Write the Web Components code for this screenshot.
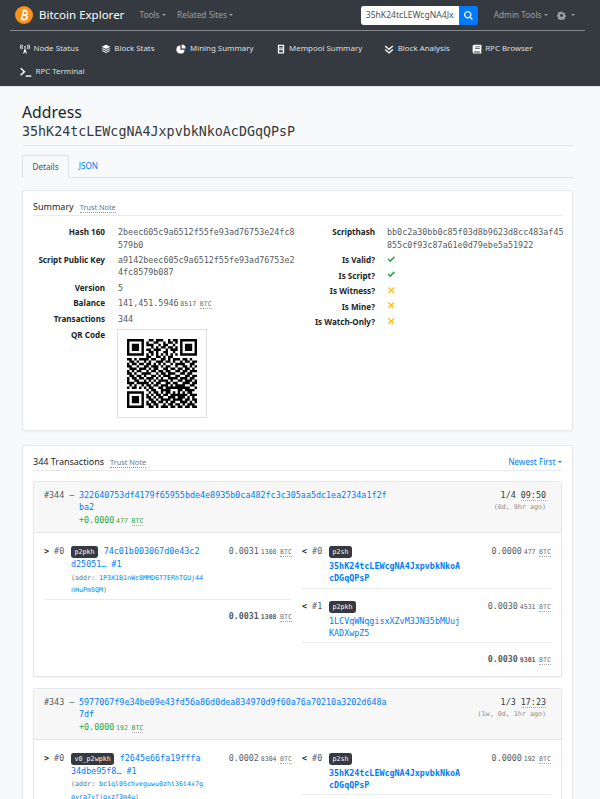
<!DOCTYPE html>
<html>
<head>
<meta charset="utf-8">
<title>Bitcoin Explorer</title>
<style>
    html, body { margin: 0; padding: 0; height: 799px; overflow: hidden; }
    body {
        background: #f8f9fa;
        color: #212529;
        font-family: "Noto Sans", "Open Sans", sans-serif;
        font-size: 8.3px;
        line-height: 12.6px;
    }
</style>
</head>
<body>
<be-navbar></be-navbar>
<be-page>
    <be-heading title="Address" sub="35hK24tcLEWcgNA4JxpvbkNkoAcDGqQPsP"></be-heading>
    <be-tabs></be-tabs>
    <be-card title="Summary" note="Trust Note">
        <be-summary></be-summary>
    </be-card>
    <be-card title="344 Transactions" note="Trust Note" action="Newest First" class="txs">
        <be-tx num="#344" hash="322640753df4179f65955bde4e8935b0ca482fc3c305aa5dc1ea2734a1f2fba2"
            amount="+0.0000" small="477" date="1/4" time="09:50" ago="(6d, 9hr ago)">
            <be-io slot="in" dir="&gt;" n="#0" badge="p2pkh" link="74c01b003067d0e43c2d25051… #1"
                addr="1P3X1B1nWc8MMD6T7ERhTGUj44nHuPm5QM" amount="0.0031" small="1308" line></be-io>
            <be-btc slot="in-total" amount="0.0031" small="1308" bold></be-btc>
            <be-io slot="out" dir="&lt;" n="#0" badge="p2sh" own="35hK24tcLEWcgNA4JxpvbkNkoAcDGqQPsP"
                amount="0.0000" small="477" line></be-io>
            <be-io slot="out" dir="&lt;" n="#1" badge="p2pkh" address="1LCVqWNqgisxXZvM3JN35bMUujKADXwpZ5"
                amount="0.0030" small="4531" line></be-io>
            <be-btc slot="out-total" amount="0.0030" small="9301" bold></be-btc>
        </be-tx>
        <be-tx num="#343" hash="5977067f9e34be09e43fd56a86d0dea834970d9f60a76a70210a3202d648a7df"
            amount="+0.0000" small="192" date="1/3" time="17:23" ago="(1w, 0d, 1hr ago)">
            <be-io slot="in" dir="&gt;" n="#0" badge="v0_p2wpkh" link="f2645e66fa19fffa34dbe95f8… #1"
                addr="bc1ql05chveguwu0zht36t4x7gpvra7yfjqxzf3m4u" amount="0.0002" small="8304" line></be-io>
            <be-io slot="out" dir="&lt;" n="#0" badge="p2sh" own="35hK24tcLEWcgNA4JxpvbkNkoAcDGqQPsP"
                amount="0.0000" small="192" line></be-io>
        </be-tx>
    </be-card>
</be-page>

<script>
const MONO = `"DejaVu Sans Mono", "Liberation Mono", monospace`;

const ICONS = {
    tower: `<path d="M8 5.2 5 15h1.7l.5-1.8h1.6l.5 1.8H11zM7.6 11.6l.4-1.6.4 1.6z"/><circle cx="8" cy="4.6" r="1.3"/><path fill="none" stroke="currentColor" stroke-width="1.4" d="M4.2 1.5a5 5 0 0 0 0 6.2M11.8 1.5a5 5 0 0 1 0 6.2M1.8.8a8 8 0 0 0 0 7.6M14.2.8a8 8 0 0 1 0 7.6"/>`,
    layers: `<path d="M8 1 15 4.5 8 8 1 4.5z"/><path d="M2.6 6.8 8 9.5l5.4-2.7L15 7.6 8 11 1 7.6z"/><path d="M2.6 10 8 12.7l5.4-2.7 1.6.8L8 14.4 1 10.8z"/>`,
    pie: `<path d="M7 2.2A6.6 6.6 0 1 0 13.8 9H7z"/><path d="M9 .6V7h6.4A6.6 6.6 0 0 0 9 .6z"/>`,
    memory: `<path fill-rule="evenodd" d="M3 1h10v14H3zM5 3v2.4h6V3zM5 7v1.4h6V7zM5 10v3h6v-3z"/>`,
    chevrons: `<path d="M2.6 2.4 8 7l5.4-4.6 1.4 1.7L8 10 1.2 4.1z"/><path d="M2.6 8 8 12.6 13.4 8l1.4 1.7L8 15.6 1.2 9.7z"/>`,
    book: `<path fill-rule="evenodd" d="M3.4 1H15v10.4l-.9.9.9 1V15H3.4A2.4 2.4 0 0 1 1 12.6V3.4A2.4 2.4 0 0 1 3.4 1zM5 4v1.2h7.5V4zM5 6.5v1.2h7.5V6.5zM3.4 12a.8.8 0 0 0 0 1.6h9.3V12z"/>`,
    gear: `<path fill-rule="evenodd" d="M6.6.8h2.8l.3 2 1.2.6 1.8-1 2 2-1 1.8.5 1.2 2 .3v2.6l-2 .4-.5 1.2 1 1.7-2 2-1.8-1-1.2.5-.3 2H6.6l-.3-2-1.2-.5-1.8 1-2-2 1-1.7-.5-1.2-2-.4V6.7l2-.3.5-1.2-1-1.8 2-2 1.8 1 1.2-.6zM8 5.4a2.6 2.6 0 1 0 0 5.2 2.6 2.6 0 0 0 0-5.2z"/>`,
    search: `<path fill-rule="evenodd" d="M6.6 0a6.6 6.6 0 0 1 5.3 10.5l3.8 3.8-1.5 1.5-3.8-3.8A6.6 6.6 0 1 1 6.6 0zm0 2.2a4.4 4.4 0 1 0 0 8.8 4.4 4.4 0 0 0 0-8.8z"/>`,
    check: `<path d="M1 8.5 3 6.5 6 9.4 13 2.5 15 4.6 6 13.5z"/>`,
    times: `<path d="M3.6 1.8 8 6.2l4.4-4.4 1.8 1.8L9.8 8l4.4 4.4-1.8 1.8L8 9.8l-4.4 4.4-1.8-1.8L6.2 8 1.8 3.6z"/>`
};

function icon(name, size = 10) {
    return `<svg xmlns="http://www.w3.org/2000/svg" width="${size}" height="${size}" viewBox="0 0 16 16" fill="currentColor">${ICONS[name]}</svg>`;
}

class BeNavItem extends HTMLElement {
    connectedCallback() {
        const shape = this.getAttribute("icon");
        const glyph = shape === "terminal"
            ? `<svg xmlns="http://www.w3.org/2000/svg" width="12" height="10" viewBox="0 0 19 16" fill="none" stroke="currentColor" stroke-width="2.2"><path d="M1 2l6 5.5L1 13"/><path d="M9 14.5h9"/></svg>`
            : icon(shape);
        this.attachShadow({ mode: "open" }).innerHTML = `
<style>
    :host { display: block; height: 23px; padding: 0 11px; }
    a { display: flex; align-items: center; gap: 3.5px; height: 23px; color: rgba(255,255,255,.85); font-size: 7.9px; }
    svg { flex: none; color: #fff; }
</style>
<a>${glyph}<span><slot></slot></span></a>`;
    }
}
customElements.define("be-nav-item", BeNavItem);

class BeNavbar extends HTMLElement {
    connectedCallback() {
        this.attachShadow({ mode: "open" }).innerHTML = `
<style>
    :host { display: block; background: #343a40; height: 87px; border-bottom: 1px solid #e4e6e8; box-sizing: border-box; }
    .top { display: flex; align-items: center; height: 31px; margin: 0 15px 0 10px; padding-left: 5px; border-bottom: 1px solid #85888c; box-sizing: border-box; }
    .brand { color: #fff; font-size: 11.5px; margin-left: 6px; }
    .menu { color: rgba(255,255,255,.5); font-size: 8.3px; }
    .caret::after { content: ""; display: inline-block; margin-left: 2.5px; vertical-align: 1.5px; border-top: 2.6px solid; border-left: 2.6px solid transparent; border-right: 2.6px solid transparent; }
    form { display: flex; margin: 0 0 0 auto; height: 19px; }
    input { width: 98px; height: 19px; box-sizing: border-box; border: 0; outline: 0; margin: 0; background: #fff; border-radius: 2.4px 0 0 2.4px; padding: 0 5px; color: #495057; font: 8.6px "Noto Sans", "Open Sans", sans-serif; }
    .go { width: 19px; background: #007bff; color: #fff; border-radius: 0 2.4px 2.4px 0; display: flex; align-items: center; justify-content: center; }
    .items { display: flex; flex-wrap: wrap; padding: 6px 0 0 9px; }
</style>
<div class="top">
    <svg xmlns="http://www.w3.org/2000/svg" width="18" height="18" viewBox="0 0 18 18">
        <circle cx="9" cy="9" r="9" fill="#f7931a"/>
        <g transform="rotate(14 9 9)" fill="none" stroke="#fff">
            <path stroke-width="1.5" d="M6.6 4.8h3.2a2 2 0 0 1 0 4.1H7.4h3a2.2 2.2 0 0 1 0 4.4H6.6M7.6 4.8v8.5"/>
            <path stroke-width=".9" d="M8.3 3.2v1.6M10 3.2v1.6M8.3 13.2v1.6M10 13.2v1.6"/>
        </g>
    </svg>
    <span class="brand">Bitcoin Explorer</span>
    <span class="menu caret" style="margin-left:15px">Tools</span>
    <span class="menu caret" style="margin-left:11px">Related Sites</span>
    <form>
        <input value="35hK24tcLEWcgNA4JxpvbkNkoAcDGqQPsP">
        <div class="go">${icon("search", 9)}</div>
    </form>
    <span class="menu caret" style="margin-left:16px">Admin Tools</span>
    <span class="menu caret" style="margin-left:9px;margin-right:10px;display:inline-flex;align-items:center">${icon("gear", 9)}<span style="width:2.5px"></span></span>
</div>
<div class="items">
    <be-nav-item icon="tower">Node Status</be-nav-item>
    <be-nav-item icon="layers">Block Stats</be-nav-item>
    <be-nav-item icon="pie">Mining Summary</be-nav-item>
    <be-nav-item icon="memory">Mempool Summary</be-nav-item>
    <be-nav-item icon="chevrons">Block Analysis</be-nav-item>
    <be-nav-item icon="book">RPC Browser</be-nav-item>
    <be-nav-item icon="terminal">RPC Terminal</be-nav-item>
</div>`;
    }
}
customElements.define("be-navbar", BeNavbar);

class BePage extends HTMLElement {
    connectedCallback() {
        this.attachShadow({ mode: "open" }).innerHTML = `
<style>
    :host { display: block; padding: 0 27px 0 22px; }
</style>
<slot></slot>`;
    }
}
customElements.define("be-page", BePage);

class BeHeading extends HTMLElement {
    connectedCallback() {
        this.attachShadow({ mode: "open" }).innerHTML = `
<style>
    :host { display: block; padding-top: 15px; height: 59px; box-sizing: border-box; border-bottom: 1px solid #e7e8ea; }
    h1 { margin: 0; font-size: 15.8px; font-weight: 400; line-height: 20px; }
    p { margin: 1px 0 0; font-family: ${MONO}; font-size: 13.35px; line-height: 18px; color: #343a40; }
</style>
<h1>${this.getAttribute("title")}</h1>
<p>${this.getAttribute("sub")}</p>`;
    }
}
customElements.define("be-heading", BeHeading);

class BeTabs extends HTMLElement {
    connectedCallback() {
        this.attachShadow({ mode: "open" }).innerHTML = `
<style>
    :host { display: flex; margin-top: 9px; height: 23px; box-sizing: border-box; border-bottom: 1px solid #dee2e6; margin-bottom: 12px; }
    a { display: block; padding: 0 9.6px; line-height: 22px; height: 23px; box-sizing: border-box; font-size: 8.1px; }
    .on { color: #495057; background: #f8f9fa; border: 1px solid #dee2e6; border-bottom-color: #f8f9fa; border-radius: 2.4px 2.4px 0 0; }
    .off { color: #007bff; }
</style>
<a class="on">Details</a><a class="off">JSON</a>`;
    }
}
customElements.define("be-tabs", BeTabs);

class BeCard extends HTMLElement {
    connectedCallback() {
        const action = this.getAttribute("action");
        this.attachShadow({ mode: "open" }).innerHTML = `
<style>
    :host { display: block; background: #fff; border: 1px solid #e6e7e9; border-radius: 2.4px; box-shadow: 0 1px 2px rgba(0,0,0,.04); padding: 7px 10px 9px; margin-bottom: 14px; }
    .head { display: flex; align-items: baseline; height: 17px; line-height: 17px; border-bottom: 1px solid #e9eaec; margin-bottom: 10px; }
    .title { font-size: 9px; }
    .note { margin-left: 6px; font-size: 7.3px; color: #6c757d; }
    .note span { border-bottom: 1px dotted #999; }
    .act { margin-left: auto; color: #007bff; font-size: 8.2px; }
    .act::after { content: ""; display: inline-block; margin-left: 2.5px; vertical-align: 1.5px; border-top: 2.6px solid; border-left: 2.6px solid transparent; border-right: 2.6px solid transparent; }
</style>
<div class="head">
    <span class="title">${this.getAttribute("title")}</span>
    <span class="note"><span>${this.getAttribute("note")}</span></span>
    ${action ? `<span class="act">${action}</span>` : ""}
</div>
<slot></slot>`;
    }
}
customElements.define("be-card", BeCard);

class BeKv extends HTMLElement {
    connectedCallback() {
        const w = this.getAttribute("w") ?? "72";
        const gap = this.getAttribute("gap") ?? "13";
        this.attachShadow({ mode: "open" }).innerHTML = `
<style>
    :host { display: grid; grid-template-columns: ${w}px minmax(0, 1fr); column-gap: ${gap}px; margin-bottom: var(--kv-gap, 2.7px); line-height: 12.6px; }
    .k { text-align: right; font-weight: 700; font-size: 8.1px; white-space: nowrap; }
    .v { font-family: ${MONO}; font-size: 8.4px; color: #555b61; word-break: break-all; min-height: 12.6px; }
    svg { vertical-align: -1px; }
</style>
<div class="k">${this.getAttribute("label")}</div>
<div class="v"><slot></slot></div>`;
    }
}
customElements.define("be-kv", BeKv);

class BeBtc extends HTMLElement {
    connectedCallback() {
        const bold = this.hasAttribute("bold");
        this.attachShadow({ mode: "open" }).innerHTML = `
<style>
    :host { display: inline-block; font-family: ${MONO}; font-size: 8.4px; line-height: 12.6px; color: var(--btc-color, #555b61); white-space: nowrap; font-weight: ${bold ? 700 : 400}; }
    small { font-size: 6.6px; margin-left: 1.8px; }
    .u { font-size: 6.6px; font-weight: 400; margin-left: 3.5px; color: var(--btc-unit, #6c757d); border-bottom: 1px dotted #aaa; }
</style>
${this.getAttribute("amount")}<small>${this.getAttribute("small")}</small><span class="u">BTC</span>`;
    }
}
customElements.define("be-btc", BeBtc);

class BeQr extends HTMLElement {
    connectedCallback() {
        const rows = [
            "11111110011011100101101111111", "10000010100110010110101000001",
            "10111010111001011001001011101", "10111010001010110110101011101",
            "10111010110111001011101011101", "10000010011010011001001000001",
            "11111110101010101010101111111", "00000000110011010110000000000",
            "11010111101100110101110110100", "01101001010011101101001011011",
            "10110110110101010010111100110", "11001001101110101100100110101",
            "01110111010110011011011011010", "10101100101101101100110110111",
            "11010011110010110111001101100", "01101101001101011100110011011",
            "10110110111010100111101110110", "10011001010101111010011011101",
            "11101111101011001101100111011", "01010010110110111010111100110",
            "10110101011001101111111111001", "00000000101100111100011011110",
            "11111110010110101101010101100", "10000010101011011011111110111",
            "10111010110101100111011101010", "10111010011010111101111011011",
            "10111010101101101011001110101", "10000010110110010110110101110",
            "11111110011010111011011011011"
        ];
        let d = "";
        rows.forEach((row, y) => {
            [...row].forEach((c, x) => { if (c === "1") d += `M${x} ${y}h1v1h-1z`; });
        });
        this.attachShadow({ mode: "open" }).innerHTML = `
<style>
    :host { display: block; width: 90px; height: 89px; box-sizing: border-box; border: 1px solid #dee2e6; background: #fff; padding: 9px; margin: .5px 0 0 -1px; }
    svg { display: block; }
</style>
<svg xmlns="http://www.w3.org/2000/svg" width="70" height="69" viewBox="0 0 29 29" preserveAspectRatio="none"><path d="${d}"/></svg>`;
    }
}
customElements.define("be-qr", BeQr);

class BeSummary extends HTMLElement {
    connectedCallback() {
        const mark = (ok) => `<span style="color:${ok ? "#28a745" : "#ffc107"}">${icon(ok ? "check" : "times", 8.5)}</span>`;
        this.attachShadow({ mode: "open" }).innerHTML = `
<style>
    :host { display: grid; grid-template-columns: 264px 268px; }
    .right { --kv-gap: 2.95px; }
</style>
<div>
    <be-kv label="Hash 160">2beec605c9a6512f55fe93ad76753e24fc8579b0</be-kv>
    <be-kv label="Script Public Key">a9142beec605c9a6512f55fe93ad76753e24fc8579b087</be-kv>
    <be-kv label="Version">5</be-kv>
    <be-kv label="Balance"><be-btc amount="141,451.5946" small="8517"></be-btc></be-kv>
    <be-kv label="Transactions">344</be-kv>
    <be-kv label="QR Code"><be-qr></be-qr></be-kv>
</div>
<div class="right">
    <be-kv w="78" gap="12" label="Scripthash">bb0c2a30bb0c85f03d8b9623d8cc483af45855c0f93c87a61e0d79ebe5a51922</be-kv>
    <be-kv w="78" gap="12" label="Is Valid?">${mark(true)}</be-kv>
    <be-kv w="78" gap="12" label="Is Script?">${mark(true)}</be-kv>
    <be-kv w="78" gap="12" label="Is Witness?">${mark(false)}</be-kv>
    <be-kv w="78" gap="12" label="Is Mine?">${mark(false)}</be-kv>
    <be-kv w="78" gap="12" label="Is Watch-Only?">${mark(false)}</be-kv>
</div>`;
    }
}
customElements.define("be-summary", BeSummary);

class BeIo extends HTMLElement {
    connectedCallback() {
        const a = (n) => this.getAttribute(n);
        let main;
        if (a("own") || a("address")) {
            // salidas: la etiqueta va en su propia linea
            const cls = a("own") ? "addr own" : "addr";
            main = `<div class="badge-line"><span class="badge">${a("badge")}</span></div><div class="${cls}">${a("own") ?? a("address")}</div>`;
        } else {
            main = `<div class="link"><span class="badge">${a("badge")}</span><span class="sp"></span><a>${a("link")}</a></div>
                <div class="sm">(addr: <a>${a("addr")}</a>)</div>`;
        }
        this.attachShadow({ mode: "open" }).innerHTML = `
<style>
    :host { display: grid; grid-template-columns: 27px 132.5px minmax(0, 1fr); padding: 0 0 2.5px; margin-bottom: 11.6px; border-bottom: 1px solid #ebecee; font-family: ${MONO}; font-size: 8.4px; line-height: 12.6px; color: #555b61; }
    .dir b { color: #212529; }
    a { color: #007bff; }
    .badge { display: inline-block; background: #343a40; color: #fff; border-radius: 2.4px; padding: 0 3.5px; font-size: 6.7px; font-weight: 400; line-height: 12px; height: 12px; vertical-align: 0; }
    .sp { display: inline-block; width: 5.5px; }
    .link { word-break: break-all; }
    .badge-line { height: 14.6px; }
    .addr { color: #007bff; word-break: break-all; }
    .own { font-weight: 700; }
    .sm { font-size: 6.65px; word-break: break-all; color: #6c757d; margin-top: .7px; }
    .amt { text-align: right; }
</style>
<div class="dir"><b>${a("dir")}</b>&nbsp;${a("n")}</div>
<div class="main">${main}</div>
<div class="amt"><be-btc amount="${a("amount")}" small="${a("small")}"></be-btc></div>`;
    }
}
customElements.define("be-io", BeIo);

class BeTx extends HTMLElement {
    connectedCallback() {
        const a = (n) => this.getAttribute(n);
        this.attachShadow({ mode: "open" }).innerHTML = `
<style>
    :host { display: block; background: #fff; border: 1px solid #e6e7e9; border-radius: 2.4px; box-shadow: 0 1px 2px rgba(0,0,0,.05); margin: 0 0 10.5px; font-family: ${MONO}; font-size: 8.4px; line-height: 12.6px; }
    .head { display: flex; height: 51px; box-sizing: border-box; padding: 7px 15px 0 10px; background: #f7f7f7; border-bottom: 1px solid #e4e5e7; color: #555b61; }
    .num { flex: none; width: 35px; white-space: pre; }
    .hash { flex: none; width: 310px; }
    .hash a { color: #007bff; word-break: break-all; }
    .hash be-btc { display: block; --btc-color: #28a745; --btc-unit: #28a745; }
    .when { flex: 1; text-align: right; color: #343a40; }
    .when u { text-decoration: none; border-bottom: 1px dotted #aaa; }
    .ago { font-size: 6.7px; color: #868e96; }
    .body { display: grid; grid-template-columns: 248px 249px; column-gap: 10px; padding: 12.5px 0 9.5px 10px; }
    .total { text-align: right; min-height: 12.6px; margin-top: -2px; }
</style>
<div class="head">
    <div class="num">${a("num")} –</div>
    <div class="hash">
        <a>${a("hash")}</a>
        <be-btc amount="${a("amount")}" small="${a("small")}"></be-btc>
    </div>
    <div class="when">${a("date")} <u>${a("time")}</u><div class="ago">${a("ago")}</div></div>
</div>
<div class="body">
    <div><slot name="in"></slot><div class="total"><slot name="in-total"></slot></div></div>
    <div><slot name="out"></slot><div class="total"><slot name="out-total"></slot></div></div>
</div>`;
    }
}
customElements.define("be-tx", BeTx);
</script>
</body>
</html>
